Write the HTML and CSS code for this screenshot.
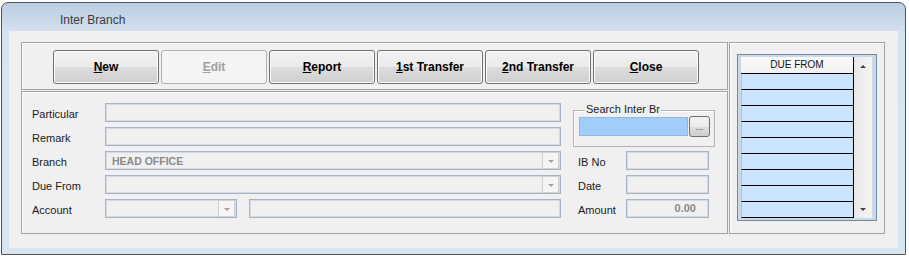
FILE: index.html
```html
<!DOCTYPE html>
<html>
<head>
<meta charset="utf-8">
<title>Inter Branch</title>
<link rel="stylesheet" href="styles.css">
</head>
<body>
<div class="window">
  <div class="titlebar">Inter Branch</div>
  <div class="client">
    <div class="leftcol">
      <div class="panel btnbox">
        <button class="btn"><u>N</u>ew</button>
        <button class="btn disabled"><u>E</u>dit</button>
        <button class="btn"><u>R</u>eport</button>
        <button class="btn"><u>1</u>st Transfer</button>
        <button class="btn"><u>2</u>nd Transfer</button>
        <button class="btn"><u>C</u>lose</button>
      </div>
      <div class="panel formbox">
        <div class="form">
          <div class="lbl r1">Particular</div>
          <div class="field r1 c2"></div>
          <div class="group">
            <span class="legend">Search Inter Br</span>
            <div class="group-row">
              <div class="blue-input"></div>
              <div class="dots">...</div>
            </div>
          </div>

          <div class="lbl r2">Remark</div>
          <div class="field r2 c2"></div>

          <div class="lbl r3">Branch</div>
          <div class="field combo r3 c2"><span class="val">HEAD OFFICE</span><span class="drop"><span class="tri"></span></span></div>
          <div class="lbl2 r3">IB No</div>
          <div class="field r3 c5"></div>

          <div class="lbl r4">Due From</div>
          <div class="field combo r4 c2"><span class="val"></span><span class="drop"><span class="tri"></span></span></div>
          <div class="lbl2 r4">Date</div>
          <div class="field r4 c5"></div>

          <div class="lbl r5">Account</div>
          <div class="acct r5 c2">
            <div class="field combo small"><span class="val"></span><span class="drop"><span class="tri"></span></span></div>
            <div class="field wide"></div>
          </div>
          <div class="lbl2 r5">Amount</div>
          <div class="field amount r5 c5">0.00</div>
        </div>
      </div>
    </div>
    <div class="panel rightpanel">
      <div class="grid">
        <div class="grid-inner">
          <div class="col">
            <div class="hdr">DUE FROM</div>
            <div class="row"></div>
            <div class="row"></div>
            <div class="row"></div>
            <div class="row"></div>
            <div class="row"></div>
            <div class="row"></div>
            <div class="row"></div>
            <div class="row"></div>
            <div class="row"></div>
          </div>
          <div class="scroll">
            <span class="arrow up"></span>
            <span class="arrow down"></span>
          </div>
        </div>
      </div>
    </div>
  </div>
</div>
</body>
</html>
```

FILE: styles.css
```css
html, body {
  margin: 0;
  padding: 0;
  background: #ffffff;
}
body {
  font-family: "Liberation Sans", Arial, sans-serif;
  font-size: 11px;
  color: #000;
}
.window {
  margin: 2px 0 0 1px;
  width: 905px;
  height: 253px;
  box-sizing: border-box;
  border: 1px solid #4f5256;
  border-radius: 7px 7px 0 0;
  background: linear-gradient(#bccee2 0px, #cbdaea 20px, #d6e3f0 30px, #d9e5f1 100%);
  display: flex;
  flex-direction: column;
}
.titlebar {
  height: 28px;
  box-sizing: border-box;
  padding: 6px 0 0 58px;
  line-height: 22px;
  font-size: 12px;
  color: #3a3a3a;
}
.client {
  margin: 0 7px;
  height: 217px;
  box-sizing: border-box;
  background: #f0f0f0;
  padding: 11px 12px 0 12px;
  display: flex;
  gap: 1px;
}
.leftcol {
  width: 707px;
  display: flex;
  flex-direction: column;
  gap: 1px;
}
.panel {
  box-sizing: border-box;
  border: 1px solid #a3a3a3;
  box-shadow: inset 1px 1px 0 #ffffff;
}
.btnbox {
  height: 48px;
  padding: 7px 0 0 31px;
  display: flex;
  gap: 2px;
}
.btn {
  width: 106px;
  height: 34px;
  box-sizing: border-box;
  margin: 0;
  padding: 0;
  border: 1px solid #707070;
  border-radius: 3px;
  background: linear-gradient(#f2f2f2 0%, #ebebeb 50%, #dddddd 51%, #cfcfcf 100%);
  box-shadow: inset 0 0 0 1px #fbfbfb;
  font-family: "Liberation Sans", Arial, sans-serif;
  font-size: 12px;
  font-weight: bold;
  color: #000;
}
.btn.disabled {
  background: #f4f4f4;
  border-color: #adb2b5;
  box-shadow: none;
  color: #a0a0a0;
}
.formbox {
  height: 143px;
  padding: 11px 10px 0 10px;
}
.form {
  display: grid;
  grid-template-columns: 73px 456px 12px 53px 83px;
  grid-template-rows: repeat(5, 19px);
  row-gap: 5px;
}
.r1 { grid-row: 1; }
.r2 { grid-row: 2; }
.r3 { grid-row: 3; }
.r4 { grid-row: 4; }
.r5 { grid-row: 5; }
.c2 { grid-column: 2; }
.c5 { grid-column: 5; }
.lbl {
  grid-column: 1;
  line-height: 19px;
  padding-top: 2px;
  color: #1a1a1a;
}
.lbl2 {
  grid-column: 4;
  line-height: 19px;
  padding: 2px 0 0 5px;
  color: #1a1a1a;
}
.field {
  box-sizing: border-box;
  height: 19px;
  border: 1px solid #a6b4c3;
  box-shadow: inset 0 0 0 1px #d2dbe5;
  background: #f0f0f0;
}
.combo {
  display: flex;
  align-items: center;
  padding: 1px;
}
.combo .val {
  flex: 1;
  padding-left: 5px;
  font-weight: bold;
  font-size: 10.5px;
  color: #8a8a8a;
}
.drop {
  width: 17px;
  height: 17px;
  box-sizing: border-box;
  border: 1px solid #d0d0d0;
  background: #f5f5f5;
  display: flex;
  align-items: center;
  justify-content: center;
}
.tri {
  width: 0;
  height: 0;
  border-left: 3px solid transparent;
  border-right: 3px solid transparent;
  border-top: 3px solid #a0a0a0;
  margin-top: 1px;
}
.acct {
  display: flex;
  gap: 12px;
}
.field.small { width: 132px; }
.field.wide { width: 312px; }
.amount {
  text-align: right;
  padding-right: 12px;
  line-height: 17px;
  font-weight: bold;
  font-size: 11px;
  color: #8a8a8a;
}
.group {
  grid-row: 1 / 3;
  grid-column: 4 / 6;
  margin-top: 7px;
  width: 142px;
  height: 37px;
  box-sizing: border-box;
  border: 1px solid #b4b4b4;
  box-shadow: inset 1px 1px 0 #ffffff;
  position: relative;
  padding: 5px 0 0 5px;
}
.legend {
  position: absolute;
  left: 11px;
  top: -8px;
  padding: 0 1px;
  background: #f0f0f0;
  line-height: 13px;
  color: #1a1a1a;
}
.group-row {
  display: flex;
  gap: 1px;
  align-items: flex-start;
}
.blue-input {
  margin-top: 1px;
  width: 109px;
  height: 19px;
  box-sizing: border-box;
  background: #a2cdf8;
  border: 1px solid #8fb8e0;
}
.dots {
  width: 21px;
  height: 21px;
  box-sizing: border-box;
  border: 1px solid #707070;
  border-radius: 3px;
  background: linear-gradient(#f2f2f2 0%, #ebebeb 50%, #dddddd 51%, #cfcfcf 100%);
  font-size: 9px;
  color: #444;
  text-align: center;
  line-height: 21px;
  letter-spacing: 0;
}
.rightpanel {
  width: 156px;
  height: 192px;
  padding: 11px 0 0 7px;
}
.grid {
  width: 140px;
  height: 167px;
  box-sizing: border-box;
  border: 1px solid #6f8aa3;
  background: #cbd9e7;
  padding: 2px 4px 2px 3px;
}
.grid-inner {
  display: flex;
  height: 161px;
  background: #f0f0f0;
}
.col {
  width: 113px;
  box-sizing: border-box;
  border-right: 1px solid #000;
}
.hdr {
  height: 17px;
  box-sizing: border-box;
  border-bottom: 1px solid #000;
  background: linear-gradient(#fbfbfb, #f1f1f1);
  text-align: center;
  font-size: 10px;
  line-height: 16px;
  color: #111;
}
.row {
  height: 16px;
  box-sizing: border-box;
  border-bottom: 1px solid #000;
  border-left: 1px solid #a9c4de;
  background: #cce4fc;
}
.scroll {
  width: 18px;
  position: relative;
  background: linear-gradient(90deg, #e9e9e9, #f4f4f4);
}
.arrow {
  position: absolute;
  left: 6px;
  width: 0;
  height: 0;
  border-left: 3px solid transparent;
  border-right: 3px solid transparent;
}
.arrow.up {
  top: 8px;
  border-bottom: 3px solid #404040;
}
.arrow.down {
  bottom: 7px;
  border-top: 3px solid #404040;
}
```
